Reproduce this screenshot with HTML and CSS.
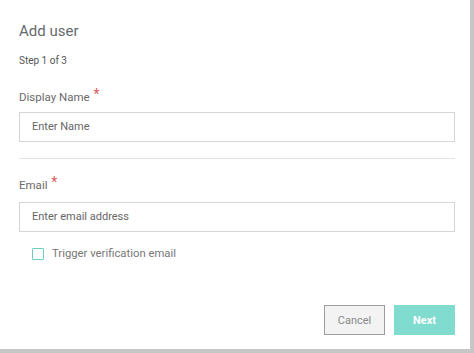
FILE: index.html
```html
<!DOCTYPE html>
<html>
<head>
<meta charset="utf-8">
<link rel="stylesheet" href="styles.css">
</head>
<body>
<div class="frame">
  <div class="card">
    <h1 class="title">Add user</h1>
    <div class="step">Step 1 of 3</div>
    <label class="label">Display Name <span class="req">*</span></label>
    <div class="input">Enter Name</div>
    <hr class="divider">
    <label class="label label-email">Email <span class="req">*</span></label>
    <div class="input input-email">Enter email address</div>
    <div class="check-row">
      <span class="checkbox"></span>
      <span class="check-text">Trigger verification email</span>
    </div>
    <div class="actions">
      <button class="btn btn-cancel">Cancel</button>
      <button class="btn btn-next">Next</button>
    </div>
  </div>
</div>
</body>
</html>
```

FILE: styles.css
```css
html, body {
  margin: 0;
  padding: 0;
}
body {
  width: 474px;
  height: 353px;
  background: #c6c6c6;
  font-family: Roboto, "Liberation Sans", sans-serif;
  color: #666;
  overflow: hidden;
}
.frame {
  width: 470px;
  height: 349px;
  background: #fff;
}
.card {
  padding: 0 15px 0 19px;
  display: flex;
  flex-direction: column;
}
.title {
  margin: 21px 0 0 0;
  font-size: 15px;
  font-weight: 400;
  line-height: 20px;
  color: #666a6e;
}
.step {
  margin-top: 14px;
  font-size: 10px;
  line-height: 12px;
  color: #555;
}
.label {
  margin-top: 22px;
  font-size: 11.5px;
  line-height: 14px;
  color: #6a6a6a;
}
.req {
  color: #e05a5a;
  font-size: 14px;
  position: relative;
  top: -2px;
  margin-left: 1px;
}
.input {
  margin-top: 8px;
  height: 28px;
  border: 1px solid #d6d6d6;
  box-sizing: content-box;
  padding: 0 12px;
  font-size: 11px;
  line-height: 28px;
  color: #666;
}
.divider {
  margin: 16px 0 0 0;
  border: 0;
  border-top: 1px solid #e4e4e4;
  height: 0;
}
.label-email {
  margin-top: 18px;
}
.input-email {
  margin-top: 10px;
}
.check-row {
  margin-top: 15px;
  margin-left: 13px;
  display: flex;
  align-items: center;
  gap: 8px;
}
.checkbox {
  width: 10px;
  height: 10px;
  border: 1.5px solid #6fcfc0;
  border-radius: 1px;
}
.check-text {
  font-size: 11.3px;
  color: #777;
  line-height: 14px;
}
.actions {
  margin-top: 44px;
  display: flex;
  justify-content: flex-end;
  gap: 9px;
}
.btn {
  height: 30px;
  width: 61px;
  font-family: Roboto, "Liberation Sans", sans-serif;
  font-size: 11px;
  padding: 0;
  cursor: pointer;
}
.btn-cancel {
  background: #f3f3f4;
  border: 1px solid #9c9c9c;
  color: #888;
}
.btn-next {
  background: #7fdccf;
  border: 1px solid #7fdccf;
  color: #fff;
  font-weight: 700;
}
```
